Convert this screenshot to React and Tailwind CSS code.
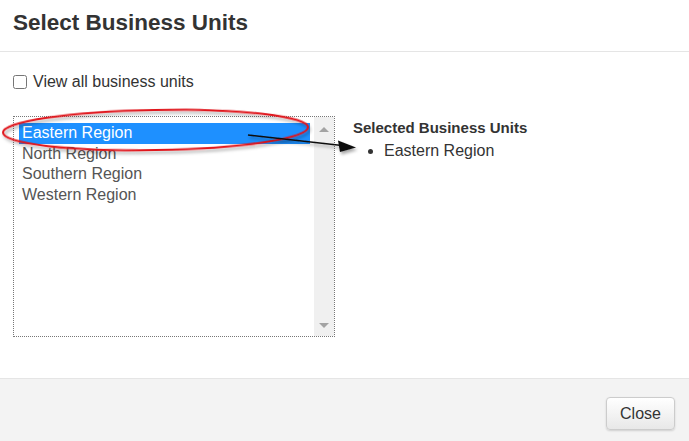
import { useState } from "react";

const units = ["Eastern Region", "North Region", "Southern Region", "Western Region"];

function Annotations() {
  return (
    <svg className="pointer-events-none absolute left-0 top-0" width="689" height="441">
      <defs>
        <filter id="shade" x="-10%" y="-50%" width="120%" height="200%">
          <feDropShadow dx="1.5" dy="2.5" stdDeviation="1.5" floodColor="#000" floodOpacity="0.35" />
        </filter>
      </defs>
      <ellipse
        cx="155.5"
        cy="130"
        rx="152.5"
        ry="20"
        fill="none"
        stroke="#e0141b"
        strokeWidth="2"
        transform="rotate(-1 155.5 130)"
        filter="url(#shade)"
      />
      <g filter="url(#shade)">
        <line x1="248" y1="135" x2="342" y2="145.5" stroke="#111" strokeWidth="1.6" />
        <polygon points="356,147.5 338,140.5 340,152" fill="#111" />
      </g>
    </svg>
  );
}

export default function App() {
  const [selected, setSelected] = useState("Eastern Region");
  const [viewAll, setViewAll] = useState(false);

  return (
    <div
      className="relative flex h-[441px] w-[689px] flex-col overflow-hidden bg-white text-[#333]"
      style={{ fontFamily: '"Liberation Sans", Arial, sans-serif' }}
    >
      <div className="h-[52px] border-b border-[#e5e5e5] px-[13px] pt-[10px]">
        <h1 className="text-[22.5px] font-bold leading-[26px] text-[#333]">Select Business Units</h1>
      </div>

      <div className="flex-1 px-[13px]">
        <label className="mt-[20px] flex items-center gap-[6px] text-[16px] leading-[20px]">
          <input
            type="checkbox"
            checked={viewAll}
            onChange={() => setViewAll((v) => !v)}
            className="m-0 h-[14px] w-[14px]"
          />
          View all business units
        </label>

        <div className="mt-[24px] flex items-start gap-[18px]">
          <div className="flex h-[221px] w-[322px] border border-dotted border-[#777]">
            <div className="flex-1 pl-[5px] pr-[4px] pt-[6px]">
              {units.map((unit) => (
                <div
                  key={unit}
                  onClick={() => setSelected(unit)}
                  className={
                    unit === selected
                      ? "h-[20.5px] bg-[#1e90ff] pl-[3px] text-[16px] leading-[20.5px] text-white"
                      : "h-[20.5px] pl-[3px] text-[16px] leading-[20.5px] text-[#555]"
                  }
                >
                  {unit}
                </div>
              ))}
            </div>
            <div className="flex w-[20px] flex-col items-center justify-between bg-[#f0f0f0] pb-[8px] pt-[10px]">
              <span className="h-0 w-0 border-x-[5px] border-b-[5px] border-x-transparent border-b-[#a3a3a3]" />
              <span className="h-0 w-0 border-x-[5px] border-t-[5px] border-x-transparent border-t-[#a3a3a3]" />
            </div>
          </div>

          <div className="pt-[3px]">
            <h2 className="text-[15px] font-bold leading-[18px] text-[#333]">Selected Business Units</h2>
            <ul className="ml-[15px] mt-[4px] list-disc pl-[16px] text-[16px] leading-[20px] text-[#333]">
              <li>{selected}</li>
            </ul>
          </div>
        </div>
      </div>

      <div className="flex h-[63px] justify-end border-t border-[#e5e5e5] bg-[#f3f3f3] pr-[14px] pt-[18px]">
        <button
          type="button"
          className="h-[33px] w-[69px] rounded-[4px] border border-[#ccc] bg-gradient-to-b from-white to-[#e8e8e8] text-[16px] text-[#333] shadow-[0_1px_2px_rgba(0,0,0,0.15)]"
        >
          Close
        </button>
      </div>

      <Annotations />
    </div>
  );
}
